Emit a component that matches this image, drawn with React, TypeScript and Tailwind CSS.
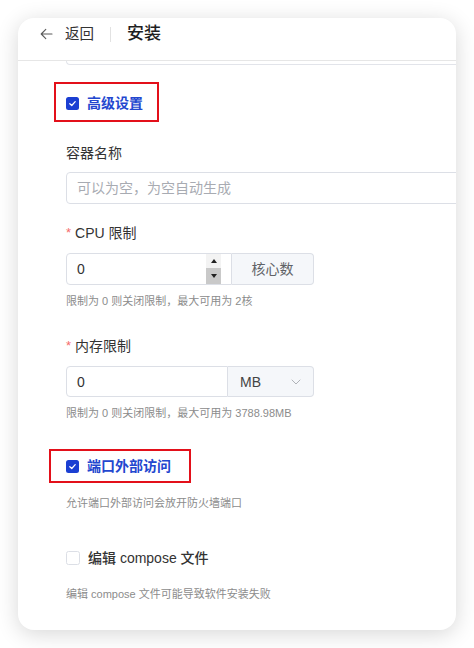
import React from "react";

function Check({ checked }: { checked: boolean }) {
  if (checked) {
    return (
      <div className="w-[13px] h-[13px] rounded-[2.5px] bg-[#1b3fd2] flex items-center justify-center shrink-0">
        <svg width="9" height="9" viewBox="0 0 10 10" fill="none">
          <path d="M2 5.2 L4.2 7.2 L8 3" stroke="white" strokeWidth="1.4" strokeLinecap="round" strokeLinejoin="round" />
        </svg>
      </div>
    );
  }
  return <div className="w-[14px] h-[14px] rounded-[2.5px] border border-[#dcdfe6] bg-white shrink-0" />;
}

export default function App() {
  return (
    <div className="w-[474px] h-[648px] bg-white p-[18px] font-['Liberation_Sans','Noto_Sans_CJK_SC',sans-serif]">
      <div className="w-[438px] h-[612px] rounded-[16px] bg-white overflow-hidden shadow-[0_4px_22px_rgba(0,0,0,0.16)] flex flex-col">
        {/* header */}
        <div className="h-[43px] shrink-0 border-b border-[#e6e6e6] flex items-start pl-[22px] pt-[6px]">
          <div className="h-[20px] flex items-center">
            <svg width="13" height="12" viewBox="0 0 13 12" fill="none">
              <path d="M12 6 H1.2 M5.8 1.3 L1.2 6 L5.8 10.7" stroke="#5a5a5a" strokeWidth="1.1" strokeLinecap="round" strokeLinejoin="round" />
            </svg>
            <span className="ml-[12px] text-[14.5px] leading-[20px] text-[#333]">返回</span>
            <div className="ml-[16px] w-px h-[15px] bg-[#e2e2e2]" />
            <span className="ml-[16px] text-[17px] leading-[20px] text-[#1f1f1f] font-medium">安装</span>
          </div>
        </div>

        {/* body */}
        <div className="flex flex-col pl-[48px]">
          <div className="h-[4px] w-[420px] border-l border-b border-[#e2e4ea] rounded-bl-[5px]" />

          {/* 高级设置 */}
          <div className="relative mt-[28px] h-[20px] flex items-center">
            <div className="absolute left-[-12px] top-[-11px] w-[105px] h-[40px] border-2 border-[#e3101a]" />
            <Check checked />
            <span className="ml-[8px] text-[14px] leading-[20px] font-semibold text-[#2347cf]">高级设置</span>
          </div>

          {/* 容器名称 */}
          <div className="mt-[30px] h-[20px] text-[14px] leading-[20px] text-[#333]">容器名称</div>
          <div className="mt-[9px] w-[420px] h-[32px] border border-[#dcdfe6] rounded-[4px] flex items-center px-[10px]">
            <span className="text-[14px] leading-[20px] text-[#a8abb2]">可以为空，为空自动生成</span>
          </div>

          {/* CPU */}
          <div className="mt-[19px] h-[20px] flex items-center text-[14px] leading-[20px] text-[#333]">
            <span className="text-[#f56c6c] mr-[4px] text-[13px]">*</span>
            <span>CPU 限制</span>
          </div>
          <div className="mt-[10px] flex h-[32px]">
            <div className="w-[166px] h-full border border-[#dcdfe6] rounded-l-[4px] flex items-center pl-[10px]">
              <span className="flex-1 text-[14px] leading-[20px] text-[#333]">0</span>
              <div className="w-[15px] h-full flex flex-col mr-[10px]">
                <div className="h-[14px] bg-[#f3f3f3] flex items-center justify-center">
                  <div className="w-0 h-0 border-l-[3.5px] border-r-[3.5px] border-b-[4px] border-l-transparent border-r-transparent border-b-[#222]" />
                </div>
                <div className="flex-1 bg-[#c9c9c9] flex items-center justify-center">
                  <div className="w-0 h-0 border-l-[3.5px] border-r-[3.5px] border-t-[4px] border-l-transparent border-r-transparent border-t-[#222]" />
                </div>
              </div>
            </div>
            <div className="w-[82px] h-full border border-l-0 border-[#dcdfe6] rounded-r-[4px] bg-[#f5f7fa] flex items-center justify-center">
              <span className="text-[14px] leading-[20px] text-[#606266]">核心数</span>
            </div>
          </div>
          <div className="mt-[8px] h-[16px] text-[11px] leading-[16px] text-[#8c8c8c]">限制为 0 则关闭限制，最大可用为 2核</div>

          {/* 内存 */}
          <div className="mt-[27px] h-[20px] flex items-center text-[14px] leading-[20px] text-[#333]">
            <span className="text-[#f56c6c] mr-[4px] text-[13px]">*</span>
            <span>内存限制</span>
          </div>
          <div className="mt-[10px] flex h-[31px]">
            <div className="w-[162px] h-full border border-[#dcdfe6] rounded-l-[4px] flex items-center pl-[10px]">
              <span className="text-[14px] leading-[20px] text-[#333]">0</span>
            </div>
            <div className="w-[86px] h-full border border-l-0 border-[#dcdfe6] rounded-r-[4px] bg-[#f5f7fa] flex items-center pl-[12px] pr-[12px] justify-between">
              <span className="text-[14px] leading-[20px] text-[#444]">MB</span>
              <svg width="10" height="6" viewBox="0 0 10 6" fill="none">
                <path d="M1 1 L5 5 L9 1" stroke="#b0b3b8" strokeWidth="1" strokeLinecap="round" strokeLinejoin="round" />
              </svg>
            </div>
          </div>
          <div className="mt-[8px] h-[16px] text-[11px] leading-[16px] text-[#8c8c8c]">限制为 0 则关闭限制，最大可用为 3788.98MB</div>

          {/* 端口外部访问 */}
          <div className="relative mt-[35px] h-[20px] flex items-center">
            <div className="absolute left-[-17px] top-[-7px] w-[142px] h-[34px] border-2 border-[#e3101a]" />
            <Check checked />
            <span className="ml-[8px] text-[14px] leading-[20px] font-semibold text-[#2347cf]">端口外部访问</span>
          </div>
          <div className="mt-[19px] h-[16px] text-[11px] leading-[16px] text-[#8c8c8c]">允许端口外部访问会放开防火墙端口</div>

          {/* compose */}
          <div className="mt-[37px] h-[20px] flex items-center">
            <Check checked={false} />
            <span className="ml-[8px] text-[14px] leading-[20px] font-medium text-[#333]">编辑 compose 文件</span>
          </div>
          <div className="mt-[18px] h-[16px] text-[11px] leading-[16px] text-[#8c8c8c]">编辑 compose 文件可能导致软件安装失败</div>
        </div>
      </div>
    </div>
  );
}
